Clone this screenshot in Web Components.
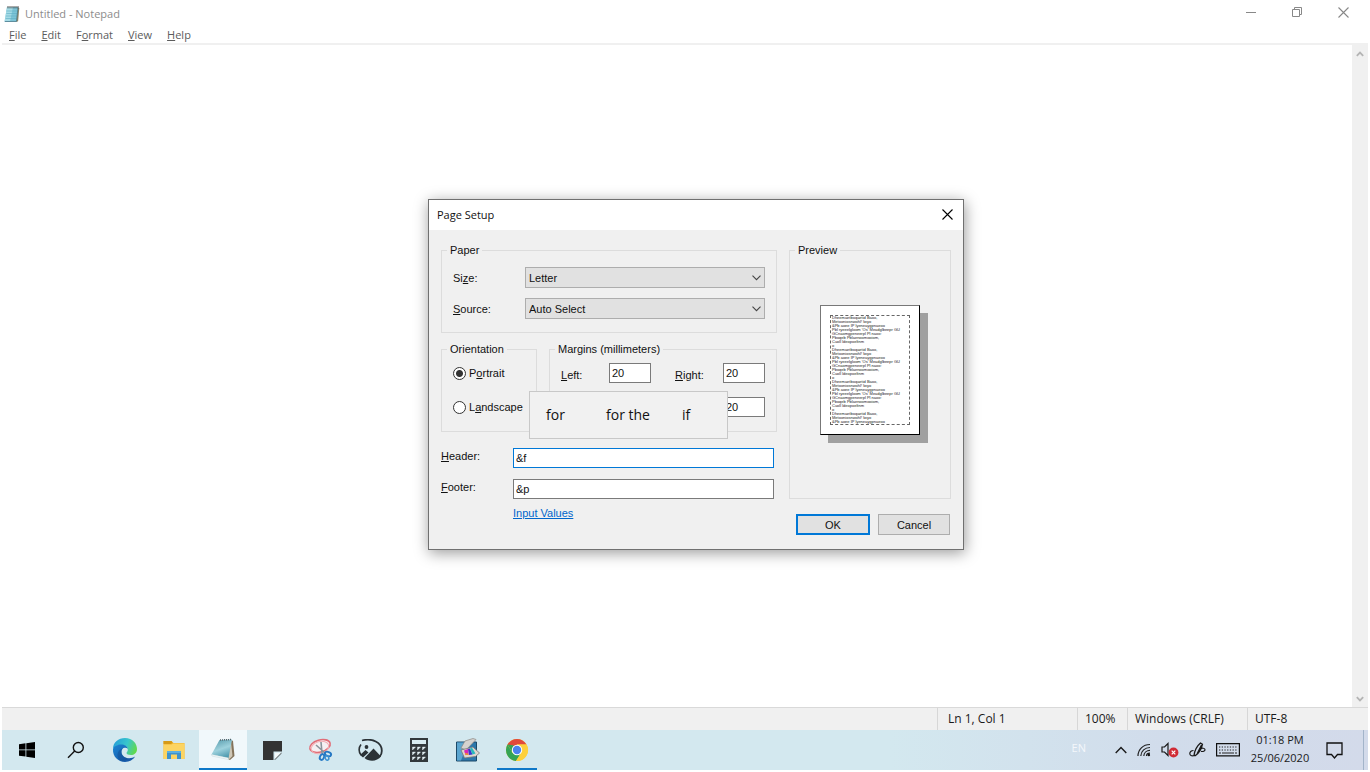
<!DOCTYPE html>
<html lang="en">
<head>
<meta charset="utf-8">
<title>Untitled - Notepad</title>
<style>
    html, body {
        margin: 0;
        height: 100%;
        background: #fff;
    }
    body {
        font-family: "Open Sans", "Noto Sans", sans-serif;
        font-size: 11px;
        line-height: 16px;
        color: #1a1a1a;
        overflow: hidden;
    }
</style>
</head>
<body>
<desktop-screen></desktop-screen>

<script>
const ICONS = {
    notepad: `<svg width="16" height="18" viewBox="0 0 16 18">
        <path d="M13.5 2.5l1.8.6-1.2 13.2-2 .6z" fill="#8b8468"/>
        <path d="M3 2h11l-1.6 14.5H.6z" fill="#7cc3d6"/>
        <path d="M3 2h6L6 16.5H.6z" fill="#a5dbe6"/>
        <path d="M2.6 6h10.5M2.3 8.5h10.5M2 11h10.5M1.6 13.5h10.5" stroke="#5eaec4" stroke-width=".6"/>
        <path d="M.8 16.5h11.6l1.6-14" fill="none" stroke="#48798a" stroke-width=".8"/>
        <path d="M4 1v2.4M6 1v2.4M8 1v2.4M10 1v2.4M12 1v2.4M14 1v2.4" stroke="#444" stroke-width=".9"/></svg>`,
    minimize: `<svg width="10" height="10" viewBox="0 0 10 10"><path d="M0 4.5h10" stroke="#888"/></svg>`,
    restore: `<svg width="11" height="11" viewBox="0 0 11 11"><path d="M.5 2.5h7v7h-7zM2.5 2.5v-2h7v7h-2" fill="none" stroke="#888"/></svg>`,
    close: `<svg width="11" height="11" viewBox="0 0 11 11"><path d="M.5.5l10 10M10.5.5l-10 10" stroke="currentColor" stroke-width="1.1"/></svg>`,
    up: `<svg width="8" height="6" viewBox="0 0 8 6"><path d="M.8 4.8L4 1.6l3.2 3.2" fill="none" stroke="#b4b4b4" stroke-width="1.8"/></svg>`,
    down: `<svg width="8" height="6" viewBox="0 0 8 6"><path d="M.8 1.2L4 4.4l3.2-3.2" fill="none" stroke="#b4b4b4" stroke-width="1.8"/></svg>`,
    start: `<svg width="16" height="16" viewBox="0 0 16 16"><path d="M0 2.2l6.5-.9v6.2H0zM7.3 1.2L16 0v7.5H7.3zM0 8.3h6.5v6.2L0 13.7zM7.3 8.3H16V16l-8.7-1.3z"/></svg>`,
    search: `<svg width="18" height="18" viewBox="0 0 18 18" fill="none" stroke="#111" stroke-width="1.4"><circle cx="11.3" cy="6.5" r="5"/><path d="M7.7 10.1L1 16.8"/></svg>`,
    edge: `<svg width="26" height="26" viewBox="0 0 26 26">
        <defs>
            <linearGradient id="g" x1="0" y1=".3" x2="1" y2=".6"><stop offset="0" stop-color="#259fd8"/><stop offset=".55" stop-color="#38c6cc"/><stop offset="1" stop-color="#62da49"/></linearGradient>
            <linearGradient id="b" x1="0" y1="0" x2="1" y2="1"><stop offset="0" stop-color="#1a84d2"/><stop offset="1" stop-color="#164f9f"/></linearGradient>
        </defs>
        <path d="M1 12C1 5 6.600 1 13 1c7.500 0 12 5.500 12 11 0 4.200-3 6-6 6-2.800 0-4.500-1-4.500-2 0-.8 1.300-1.200 1.300-3.200C15.800 9.500 12.500 8 9 8c-4 0-7 2-8 4z" fill="url(#g)"/>
        <path d="M1 12c1-3 4.500-4.600 8-4.600 3.800 0 6.600 2 6.800 4.600-1-1-2-1.200-3-1.200-2 0-3.300 1.800-3.300 4 0 4 3.500 6.500 7.500 6.500 2.500 0 4.500-.8 6-1.700C21.200 22.800 17.500 25 13 25 6.200 25 .5 19.500 1 12z" fill="url(#b)"/>
        <path d="M9.500 14.800c0 4 3.500 6.500 7.500 6.500-2 2-6 3.500-9 2C4.500 21.200 4 13 11 11.300c-1 .8-1.500 2-1.500 3.500z" fill="#114a8b" opacity=".45"/></svg>`,
    explorer: `<svg width="22" height="20" viewBox="0 0 22 20">
        <path d="M.5 1h8l2 2h11v16H.5z" fill="#f2b632"/>
        <path d="M.5 1h8l1 1.500-1.500 1.500H.5z" fill="#d69a17"/>
        <path d="M.5 4.500h8l2-1h11V19H.5z" fill="#fcd462"/>
        <path d="M4 19v-8h14v8h-4v-4.500H8V19z" fill="#3f93cd"/><path d="M4 11h14v2H4z" fill="#5bb0e2"/></svg>`,
    notepadBig: `<svg width="24" height="24" viewBox="0 0 24 24">
        <defs><linearGradient id="n" x1=".3" y1="0" x2=".7" y2="1"><stop offset="0" stop-color="#5c9fb0"/><stop offset=".5" stop-color="#9ed2dd"/><stop offset="1" stop-color="#4795ab"/></linearGradient></defs>
        <path d="M20.500 2l1.500 1 1.500 15-4.500 4-2-1z" fill="#84735a"/><path d="M20 4l1.500 14-3 3-1.500-1z" fill="#cfc7b6"/>
        <path d="M8.500 2L21 1.500 17.500 20 .5 16.500z" fill="url(#n)"/><path d="M.5 16.500l17 3.500v1.500L1 18z" fill="#f8fcfc" stroke="#b3cdd2" stroke-width=".4"/>
        <path d="M9 2L21 1.500" stroke="#566269" stroke-dasharray="1 1" stroke-width="1.500"/></svg>`,
    note: `<svg width="19" height="19" viewBox="0 0 19 19"><path d="M0 0h19v10.500h-8.500V19H0z" fill="#333"/><path d="M11.800 18.300v-6.500h6.500z" fill="#f5fafa"/><path d="M18.500 11.300v1.500l-6 6H11z" fill="#333" opacity=".6"/></svg>`,
    snip: `<svg width="26" height="24" viewBox="0 0 26 24" fill="none">
        <ellipse cx="12" cy="8" rx="10.500" ry="6" transform="rotate(-16 12 8)" fill="#f5f0f2" stroke="#e16d77" stroke-width="1.600"/>
        <ellipse cx="12" cy="9.500" rx="9" ry="6" transform="rotate(-16 12 9.500)" stroke="#f2aeb3"/>
        <path d="M8 7l9 8M13 4l1 11" stroke="#8a949b" stroke-width="1.600"/>
        <ellipse cx="14" cy="19" rx="2" ry="3" transform="rotate(25 14 19)" stroke="#2678c4" stroke-width="1.900"/>
        <ellipse cx="20" cy="16" rx="3.200" ry="2.100" transform="rotate(20 20 16)" stroke="#2678c4" stroke-width="1.900"/>
        <ellipse cx="19" cy="20" rx="1.700" ry="2.200" transform="rotate(-25 19 20)" stroke="#3f92d2" stroke-width="1.500"/></svg>`,
    photo: `<svg width="25" height="22" viewBox="0 0 25 22">
        <path d="M4 1.500C14-1 24 3 23.800 12c0 2-.8 4-2 5.300" fill="none" stroke="#2b3236" stroke-width="1.800"/>
        <path d="M3 5.500c-2.500 3-2.500 7.500 0 10.500" fill="none" stroke="#2b3236" stroke-width="1.600"/>
        <circle cx="8.500" cy="8" r="1.900" fill="#2b3236"/>
        <path d="M2 16l5.500-5 3 2.500-5.500 5zM6.500 19l9-9.500 7.500 8c-3.500 5-12 5.500-16.500 1.500z" fill="#2b3236"/></svg>`,
    calculator: `<svg width="18" height="24" viewBox="0 0 18 24"><path d="M0 0h18v24H0z" fill="#33393c"/><path d="M2 2h14v4H2z" fill="#d9ecf1"/>
        <path d="M2.500 9h3L2.500 12zM7.500 9h3l-3 3zM12.500 9h3l-3 3zM2.500 14h3l-3 3zM7.500 14h3l-3 3zM12.500 14h3l-3 3zM2.500 19h3l-3 3zM7.500 19h3l-3 3zM12.500 19h3l-3 3z" fill="#e3f1f4" stroke="#e3f1f4" stroke-width=".4"/></svg>`,
    scanner: `<svg width="24" height="24" viewBox="0 0 24 24">
        <path d="M.5 4h20v19H.5z" fill="#2c77ab" stroke="#1c4968"/><path d="M1 4.500h11L5 22.500H1z" fill="#5aa5d0"/>
        <path d="M9 3l8-2.500 3 1L10 12 5 10z" fill="#d5d2cf" stroke="#8e8783" stroke-width=".7"/>
        <path d="M5 12l12-3 6.500 6-4 3.500-11 1.500z" fill="#ddd6cf" stroke="#777" stroke-width=".8"/>
        <path d="M8 12.500l4-1.500.5 6H9.500z" fill="#d427b8"/><path d="M12 11l2-.6 2.500 6-3.500.6z" fill="#3c36cc"/><path d="M14 10.400l2-.6 3.500 5.700-3 .9z" fill="#28b9bd"/><path d="M9 15l3 .5.5 1.500H9.500z" fill="#f0912b"/></svg>`,
    chrome: `<svg width="24" height="24" viewBox="0 0 24 24">
        <circle cx="12" cy="12" r="11" fill="#fdd03c"/>
        <path d="M12 12L2.500 6.500A11 11 0 0 1 21.500 6.500H12z" fill="#e1493b"/>
        <path d="M2.500 6.500A11 11 0 0 0 11 23l5.500-8.500L12 12 7.500 15z" fill="#35a455"/>
        <path d="M2.500 6.500L7 14l2-6.500z" fill="#35a455"/><path d="M12 6.500h9.500A11 11 0 0 1 11 23l5.800-9.500z" fill="#fdd03c"/>
        <circle cx="12" cy="12" r="5.200" fill="#fff"/><circle cx="12" cy="12" r="4.200" fill="#4b83ed"/></svg>`,
    chevron: `<svg width="12" height="8" viewBox="0 0 12 8"><path d="M.7 7L6 1.500 11.300 7" fill="none" stroke="#1a1a1a" stroke-width="1.400"/></svg>`,
    wifi: `<svg width="14" height="14" viewBox="0 0 14 14" fill="none" stroke="#222"><path d="M1 13C1 6.500 6 1.500 13 1.500M3.800 13C4 8 8 4.500 13 4.500M6.800 13c.2-3.500 3-5.600 6.200-5.600M9.500 13c0-1.700 1.700-2.800 3.500-2.800" stroke-width="1.200"/><circle cx="11.800" cy="12" r="1.300" fill="#111" stroke="none"/></svg>`,
    volume: `<svg width="18" height="16" viewBox="0 0 18 16"><path d="M1 5h2.500L7 1.500v12L3.500 10H1z" fill="none" stroke="#1a1a1a" stroke-width="1.200"/><circle cx="12.500" cy="10.500" r="4.900" fill="#d02b35"/><path d="M10.700 8.700l3.600 3.600M14.300 8.700l-3.600 3.600" stroke="#fff" stroke-width="1.200"/></svg>`,
    pen: `<svg width="17" height="16" viewBox="0 0 17 16" fill="none" stroke="#1a1a1a"><path d="M5 13.500c.5-4 3-9.500 6.500-12.500l2 1.200C12.500 7 9.500 11.500 6.500 13.500zM8 12l4.500-9" stroke-width="1.300"/><path d="M4.500 8.500C2 8.500.8 10 .8 11.500c0 2 2 2.700 4 2M11 7c2-1.300 5-1 5 .8 0 1.500-2 2-4 1.500" stroke-width="1.200"/></svg>`,
    keyboard: `<svg width="24" height="14" viewBox="0 0 24 14"><path d="M.6.6h22.800v12.300H.6z" fill="none" stroke="#111" stroke-width="1.200"/><path d="M3 4h18M3 7h18" stroke="#222" stroke-width="1.200" stroke-dasharray="1.300 1.400"/><path d="M3 10h2M6 10h12M19 10h2" stroke="#222" stroke-width="1.200"/></svg>`,
    action: `<svg width="17" height="17" viewBox="0 0 17 17"><path d="M1 1h15v11.500h-4.500L8.500 16l-3-3.500H1z" fill="none" stroke="#111" stroke-width="1.300"/></svg>`
};

class AppIcon extends HTMLElement {
    constructor() {
        super();
        this.attachShadow({ mode: "open" });
    }

    connectedCallback() {
        this.shadowRoot.innerHTML = `
            <style>
                :host { display: inline-flex; flex: none; }
                svg { display: block; }
            </style>
            ${ICONS[this.getAttribute("name")]}
        `;
    }
}

class TitleBar extends HTMLElement {
    constructor() {
        super();
        this.attachShadow({ mode: "open" });
    }

    connectedCallback() {
        this.shadowRoot.innerHTML = `
            <style>
                :host { display: flex; align-items: center; height: 27px; padding: 0 2px; color: #8c8c8c; }
                .name { flex: 1; padding-left: 5px; }
                button { width: 46px; height: 26px; padding: 0 0 2px; border: 0; background: none; color: #888;
                    display: flex; align-items: center; justify-content: center; }
            </style>
            <app-icon name="notepad"></app-icon>
            <span class="name"><slot></slot></span>
            <button aria-label="Minimize"><app-icon name="minimize"></app-icon></button>
            <button aria-label="Restore"><app-icon name="restore"></app-icon></button>
            <button aria-label="Close"><app-icon name="close"></app-icon></button>
        `;
    }
}

class MenuBar extends HTMLElement {
    constructor() {
        super();
        this.attachShadow({ mode: "open" });
    }

    connectedCallback() {
        this.shadowRoot.innerHTML = `
            <style>
                :host { display: flex; gap: 15px; height: 16px; padding-left: 7px; border-bottom: 2px solid #f0f0f0; }
                button { padding: 0; border: 0; background: none; font: inherit; color: #5c5c5c; }
            </style>
            <button><u>F</u>ile</button>
            <button><u>E</u>dit</button>
            <button>F<u>o</u>rmat</button>
            <button><u>V</u>iew</button>
            <button><u>H</u>elp</button>
        `;
    }
}

class StatusBar extends HTMLElement {
    constructor() {
        super();
        this.attachShadow({ mode: "open" });
    }

    connectedCallback() {
        this.shadowRoot.innerHTML = `
            <style>
                :host { display: flex; justify-content: flex-end; height: 22px; padding-right: 1px; font-size: 12px; line-height: 22px;
                    background: #f0f0f0; border-top: 1px solid #d9d9d9; }
                span { box-sizing: border-box; padding-left: 7px; border-left: 1px solid #d7d7d7; }
                .position { width: 140px; padding-left: 10px; }
                .zoom { width: 50px; }
                .wide { width: 120px; }
            </style>
            <span class="position">Ln 1, Col 1</span>
            <span class="zoom">100%</span>
            <span class="wide">Windows (CRLF)</span>
            <span class="wide">UTF-8</span>
        `;
    }
}

class NotepadWindow extends HTMLElement {
    constructor() {
        super();
        this.attachShadow({ mode: "open" });
    }

    connectedCallback() {
        this.shadowRoot.innerHTML = `
            <style>
                :host { display: flex; flex-direction: column; background: #fff; }
                .editor { flex: 1; display: flex; min-height: 0; }
                textarea { flex: 1; border: 0; padding: 2px 4px; resize: none; outline: none; overflow: hidden; }
                .scroll { width: 16px; display: flex; flex-direction: column; justify-content: space-between; background: #f0f0f0; }
                .scroll button { height: 17px; padding: 0; border: 0; background: none; display: flex; align-items: center; justify-content: center; }
            </style>
            <title-bar>Untitled - Notepad</title-bar>
            <menu-bar></menu-bar>
            <div class="editor">
                <textarea aria-label="Text editor"></textarea>
                <div class="scroll">
                    <button aria-label="Scroll up"><app-icon name="up"></app-icon></button>
                    <button aria-label="Scroll down"><app-icon name="down"></app-icon></button>
                </div>
            </div>
            <status-bar></status-bar>
        `;
    }
}

class GroupBox extends HTMLElement {
    constructor() {
        super();
        this.attachShadow({ mode: "open" });
    }

    connectedCallback() {
        this.shadowRoot.innerHTML = `
            <style>
                :host { display: block; box-sizing: border-box; }
                fieldset { box-sizing: border-box; height: 100%; min-width: 0; margin: 0; padding: 0 11px; border: 1px solid #dcdcdc; }
                legend { margin-left: -6px; padding: 0 3px; }
            </style>
            <fieldset>
                <legend>${this.getAttribute("label")}</legend>
                <slot></slot>
            </fieldset>
        `;
    }
}

// Sample letter, repeated down the sheet until the margin cuts it off
const SAMPLE = [
    "Dheemaetboqaetid Baoo,",
    "Metooniosnwohl! lwyo",
    "&Pb aoee IP lyeneaygpnaeoo",
    "Pbl ryeeelgloom 'Os' Meadglbeepr GU",
    "GCnaomgpeneerpl Pl naoo:",
    "Pboqeb Pblaenoomooiom,",
    "Cuoll ldeopoeltnm",
    "o"
];

class PaperPreview extends HTMLElement {
    constructor() {
        super();
        this.attachShadow({ mode: "open" });
    }

    connectedCallback() {
        const lines = Array.from({ length: 27 }, (_, i) => SAMPLE[i % SAMPLE.length]);
        this.shadowRoot.innerHTML = `
            <style>
                :host { display: block; box-sizing: border-box; width: 100px; height: 130px; padding: 9px; background: #fff;
                    border: 1px solid #777; border-right-color: #000; border-bottom-color: #000; box-shadow: 8px 8px 0 #a0a0a0; }
                .area { box-sizing: border-box; height: 100%; border: 1px dashed #666; overflow: hidden; }
                p { margin: 0; padding-left: 1px; font-size: 4px; line-height: 4px; color: #222; white-space: nowrap; }
            </style>
            <div class="area">${lines.map(line => `<p>${line.replace("&", "&amp;")}</p>`).join("")}</div>
        `;
    }
}

class PageSetupDialog extends HTMLElement {
    constructor() {
        super();
        this.attachShadow({ mode: "open" });
    }

    connectedCallback() {
        this.shadowRoot.innerHTML = `
            <style>
                :host { display: block; box-sizing: border-box; border: 1px solid #707070; background: #f0f0f0; color: #111;
                    font-family: "Liberation Sans", Arial, sans-serif; font-size: 11px; line-height: 14px;
                    box-shadow: 1px 3px 14px rgba(0, 0, 0, .4); }
                header { display: flex; align-items: center; height: 30px; padding-left: 8px; background: #fff;
                    font-family: "Open Sans", "Noto Sans", sans-serif; }
                header span { flex: 1; }
                header button { width: 31px; height: 30px; padding: 0 0 2px; border: 0; background: none;
                    display: flex; align-items: center; justify-content: center; }
                main { display: flex; gap: 12px; padding: 13px 12px 14px; }
                .settings { flex: 1; display: flex; flex-direction: column; }
                .side { width: 162px; display: flex; flex-direction: column; gap: 15px; }
                group-box { height: 90px; }
                .side group-box { height: 256px; }
                .pair { display: flex; gap: 12px; margin: 9px 0 16px; }
                .pair group-box:first-child { width: 96px; }
                .pair group-box:last-child { flex: 1; }
                .row { display: flex; align-items: center; }
                .row > label { width: 72px; }
                .rows { display: flex; flex-direction: column; gap: 10px; padding-top: 10px; }
                select { height: 21px; padding: 0 3px; border: 1px solid #adadad; border-radius: 0; font: inherit; color: inherit;
                    appearance: none; background: #e1e1e1; }
                .select { flex: 1; display: grid; align-items: center; }
                .select > * { grid-area: 1 / 1; }
                .arrow { justify-self: end; margin-right: 4px; pointer-events: none; }
                .radios { display: flex; flex-direction: column; gap: 14px; padding-top: 7px; }
                .radios label { display: flex; align-items: center; gap: 3px; height: 20px; white-space: nowrap; }
                input { box-sizing: border-box; min-width: 0; font: inherit; color: inherit; }
                input[type=radio] { appearance: none; flex: none; width: 13px; height: 13px; margin: 0; border: 1px solid #333; border-radius: 50%; background: #fff; }
                input[type=radio]:checked { background: radial-gradient(circle, #333 3px, #fff 4px); }
                input[type=text] { height: 20px; padding: 0 2px; border: 1px solid #7a7a7a; border-radius: 0; background: #fff; outline: none; }
                .margins { display: grid; grid-template-columns: 48px 42px 72px 42px; row-gap: 14px; align-items: center; padding-top: 7px; }
                .margins label { padding-top: 4px; }
                .margins label:nth-of-type(2) { margin-left: 24px; }
                .margins .bottom { grid-column: 4; }
                .fields { display: flex; flex-direction: column; gap: 11px; padding-right: 3px; }
                .fields label { padding-bottom: 4px; }
                .fields input { flex: 1; }
                .fields .focused { border-color: #0078d7; }
                a { align-self: flex-start; margin: 7px 0 0 72px; color: #0066cc; }
                paper-preview { margin: 48px auto 0; }
                .actions { display: flex; gap: 8px; padding: 0 1px 0 7px; }
                .actions button { flex: 1 1 0; box-sizing: border-box; height: 21px; padding: 0; border: 1px solid #adadad; background: #e1e1e1; font: inherit; color: inherit; }
                .actions .default { border: 2px solid #0078d7; }
            </style>
            <header>
                <span>Page Setup</span>
                <button aria-label="Close"><app-icon name="close"></app-icon></button>
            </header>
            <main>
                <div class="settings">
                    <group-box label="Paper">
                        <div class="rows">
                            <div class="row">
                                <label for="size">Si<u>z</u>e:</label>
                                <div class="select">
                                    <select id="size"><option>Letter</option></select>
                                    <svg class="arrow" width="9" height="6" viewBox="0 0 9 6"><path d="M.5.7l4 4 4-4" fill="none" stroke="#444" stroke-width="1.1"/></svg>
                                </div>
                            </div>
                            <div class="row">
                                <label for="source"><u>S</u>ource:</label>
                                <div class="select">
                                    <select id="source"><option>Auto Select</option></select>
                                    <svg class="arrow" width="9" height="6" viewBox="0 0 9 6"><path d="M.5.7l4 4 4-4" fill="none" stroke="#444" stroke-width="1.1"/></svg>
                                </div>
                            </div>
                        </div>
                    </group-box>
                    <div class="pair">
                        <group-box label="Orientation">
                            <div class="radios">
                                <label><input type="radio" name="orientation" checked><span>P<u>o</u>rtrait</span></label>
                                <label><input type="radio" name="orientation"><span>L<u>a</u>ndscape</span></label>
                            </div>
                        </group-box>
                        <group-box label="Margins (millimeters)">
                            <div class="margins">
                                <label for="left"><u>L</u>eft:</label>
                                <input type="text" id="left" value="20">
                                <label for="right"><u>R</u>ight:</label>
                                <input type="text" id="right" value="20">
                                <input type="text" class="bottom" aria-label="Bottom" value="20">
                            </div>
                        </group-box>
                    </div>
                    <div class="fields">
                        <div class="row">
                            <label for="header"><u>H</u>eader:</label>
                            <input type="text" id="header" class="focused" value="&amp;f">
                        </div>
                        <div class="row">
                            <label for="footer"><u>F</u>ooter:</label>
                            <input type="text" id="footer" value="&amp;p">
                        </div>
                    </div>
                    <a href="#">Input Values</a>
                </div>
                <div class="side">
                    <group-box label="Preview">
                        <paper-preview></paper-preview>
                    </group-box>
                    <div class="actions">
                        <button class="default">OK</button>
                        <button>Cancel</button>
                    </div>
                </div>
            </main>
        `;
    }
}

class WordSuggestions extends HTMLElement {
    constructor() {
        super();
        this.attachShadow({ mode: "open" });
    }

    connectedCallback() {
        this.shadowRoot.innerHTML = `
            <style>
                :host { display: flex; box-sizing: border-box; background: #f1f1f1; border: 1px solid #c8c8c8; }
                button { min-width: 60px; padding: 0 16px; border: 0; background: none; font: inherit; font-size: 14px; color: #111; text-align: left; white-space: nowrap; }
            </style>
            <button>for</button>
            <button>for the</button>
            <button>if</button>
        `;
    }
}

class TaskBar extends HTMLElement {
    constructor() {
        super();
        this.attachShadow({ mode: "open" });
    }

    connectedCallback() {
        const apps = [
            ["start", "Start"], ["search", "Search"], ["edge", "Edge"], ["explorer", "File Explorer"],
            ["notepadBig", "Notepad", "active"], ["note", "Sticky Notes"], ["snip", "Snipping Tool"],
            ["photo", "Photos"], ["calculator", "Calculator"], ["scanner", "Scanner"], ["chrome", "Chrome", "open"]
        ];
        const tray = [["chevron", "Hidden icons"], ["wifi", "Network"], ["volume", "Volume"], ["pen", "Ink"], ["keyboard", "Keyboard"]];
        this.shadowRoot.innerHTML = `
            <style>
                :host { display: flex; justify-content: space-between; height: 40px; background: linear-gradient(90deg, #d3e8ef 65%, #d1dceb 85%, #d3daea); }
                .apps { display: flex; gap: 1px; padding-left: 1px; }
                button { box-sizing: border-box; padding: 0; border: 0; background: none; display: flex; align-items: center; justify-content: center; }
                .apps button { width: 48px; }
                .active { background: #f1f8fb; box-shadow: inset 0 -2px #0f78c8; }
                .open { background: linear-gradient(#0f78c8, #0f78c8) center bottom / 40px 2px no-repeat; }
                .tray { display: flex; align-items: center; }
                .lang { margin-right: 29px; color: #f4f7fb; padding-bottom: 4px; }
                .icons { display: flex; gap: 10px; }
                .clock { width: 80px; text-align: center; line-height: 18px; padding-bottom: 2px; }
                .action { width: 28px; }
                .desktop { width: 5px; height: 100%; margin-left: 15px; border-left: 1px solid #a3b4ca; }
            </style>
            <div class="apps">
                ${apps.map(([icon, label, state]) => `<button class="${state || ""}" aria-label="${label}"><app-icon name="${icon}"></app-icon></button>`).join("")}
            </div>
            <div class="tray">
                <span class="lang">EN</span>
                <div class="icons">
                    ${tray.map(([icon, label]) => `<button aria-label="${label}"><app-icon name="${icon}"></app-icon></button>`).join("")}
                </div>
                <div class="clock">01:18 PM<br>25/06/2020</div>
                <button class="action" aria-label="Notifications"><app-icon name="action"></app-icon></button>
                <button class="desktop" aria-label="Show desktop"></button>
            </div>
        `;
    }
}

class DesktopScreen extends HTMLElement {
    constructor() {
        super();
        this.attachShadow({ mode: "open" });
    }

    connectedCallback() {
        this.shadowRoot.innerHTML = `
            <style>
                :host { display: flex; flex-direction: column; box-sizing: border-box; height: 100vh; padding: 0 2px 2px; }
                notepad-window { flex: 1; min-height: 0; }
                page-setup-dialog { position: absolute; left: 428px; top: 199px; width: 536px; }
                word-suggestions { position: absolute; left: 529px; top: 391px; width: 199px; height: 48px; }
            </style>
            <notepad-window></notepad-window>
            <task-bar></task-bar>
            <page-setup-dialog></page-setup-dialog>
            <word-suggestions></word-suggestions>
        `;
    }
}

customElements.define("app-icon", AppIcon);
customElements.define("title-bar", TitleBar);
customElements.define("menu-bar", MenuBar);
customElements.define("status-bar", StatusBar);
customElements.define("notepad-window", NotepadWindow);
customElements.define("group-box", GroupBox);
customElements.define("paper-preview", PaperPreview);
customElements.define("page-setup-dialog", PageSetupDialog);
customElements.define("word-suggestions", WordSuggestions);
customElements.define("task-bar", TaskBar);
customElements.define("desktop-screen", DesktopScreen);
</script>
</body>
</html>
